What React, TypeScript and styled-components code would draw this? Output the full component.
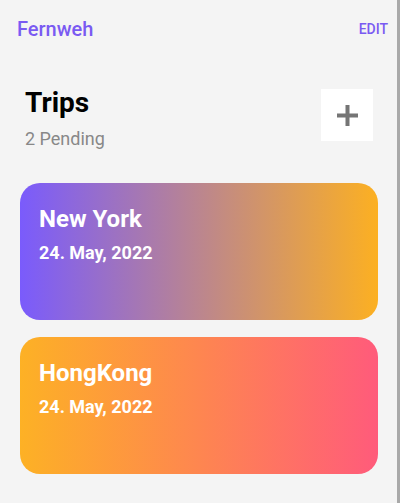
import React from 'react';
import styled, { createGlobalStyle } from 'styled-components';

const GlobalStyle = createGlobalStyle`
  html, body {
    margin: 0;
    padding: 0;
    background: #f4f4f4;
    font-family: Roboto, "Liberation Sans", sans-serif;
  }
`;

const Screen = styled.div`
  width: 400px;
  height: 503px;
  box-sizing: border-box;
  background: #f4f4f4;
  border-right: 3px solid #a9a9a9;
  display: flex;
  flex-direction: column;
`;

const AppBar = styled.header`
  display: flex;
  align-items: center;
  justify-content: space-between;
  height: 58px;
  padding: 0 9px 0 17px;
`;

const Brand = styled.div`
  font-size: 20px;
  font-weight: 500;
  color: #7a5af2;
`;

const EditButton = styled.button`
  border: none;
  background: none;
  padding: 0;
  font-family: inherit;
  font-size: 14px;
  font-weight: 500;
  color: #7a5af2;
`;

const Header = styled.section`
  display: flex;
  align-items: flex-start;
  justify-content: space-between;
  padding: 28px 24px 0 25px;
`;

const Heading = styled.div`
  display: flex;
  flex-direction: column;
`;

const Title = styled.h1`
  margin: 0;
  font-size: 28px;
  font-weight: 700;
  color: #000;
  line-height: 34px;
`;

const Subtitle = styled.div`
  margin-top: 8px;
  font-size: 18px;
  color: #888;
`;

const AddButton = styled.button`
  width: 52px;
  height: 52px;
  margin-top: 3px;
  border: none;
  background: #fff;
  display: flex;
  align-items: center;
  justify-content: center;
  padding: 0;
`;

const CardList = styled.div`
  display: flex;
  flex-direction: column;
  gap: 17px;
  padding: 34px 19px 0 20px;
`;

const Card = styled.div<{ $from: string; $to: string }>`
  height: 137px;
  border-radius: 20px;
  background: linear-gradient(90deg, ${(p) => p.$from}, ${(p) => p.$to});
  padding: 22px 19px;
  box-sizing: border-box;
  color: #fff;
`;

const City = styled.div`
  font-size: 24px;
  font-weight: 700;
  line-height: 28px;
`;

const DateText = styled.div`
  margin-top: 9px;
  font-size: 18px;
  font-weight: 700;
`;

const trips = [
  { city: 'New York', date: '24. May, 2022', from: '#7a5bfc', to: '#fcb022' },
  { city: 'HongKong', date: '24. May, 2022', from: '#fdb125', to: '#ff5b7b' },
];

export default function App() {
  return (
    <>
      <GlobalStyle />
      <Screen>
        <AppBar>
          <Brand>Fernweh</Brand>
          <EditButton>EDIT</EditButton>
        </AppBar>
        <Header>
          <Heading>
            <Title>Trips</Title>
            <Subtitle>2 Pending</Subtitle>
          </Heading>
          <AddButton aria-label="Add trip">
            <svg width="21" height="21" viewBox="0 0 21 21">
              <path d="M10.5 0v21M0 10.5h21" stroke="#757575" strokeWidth="4" />
            </svg>
          </AddButton>
        </Header>
        <CardList>
          {trips.map((t) => (
            <Card key={t.city} $from={t.from} $to={t.to}>
              <City>{t.city}</City>
              <DateText>{t.date}</DateText>
            </Card>
          ))}
        </CardList>
      </Screen>
    </>
  );
}
